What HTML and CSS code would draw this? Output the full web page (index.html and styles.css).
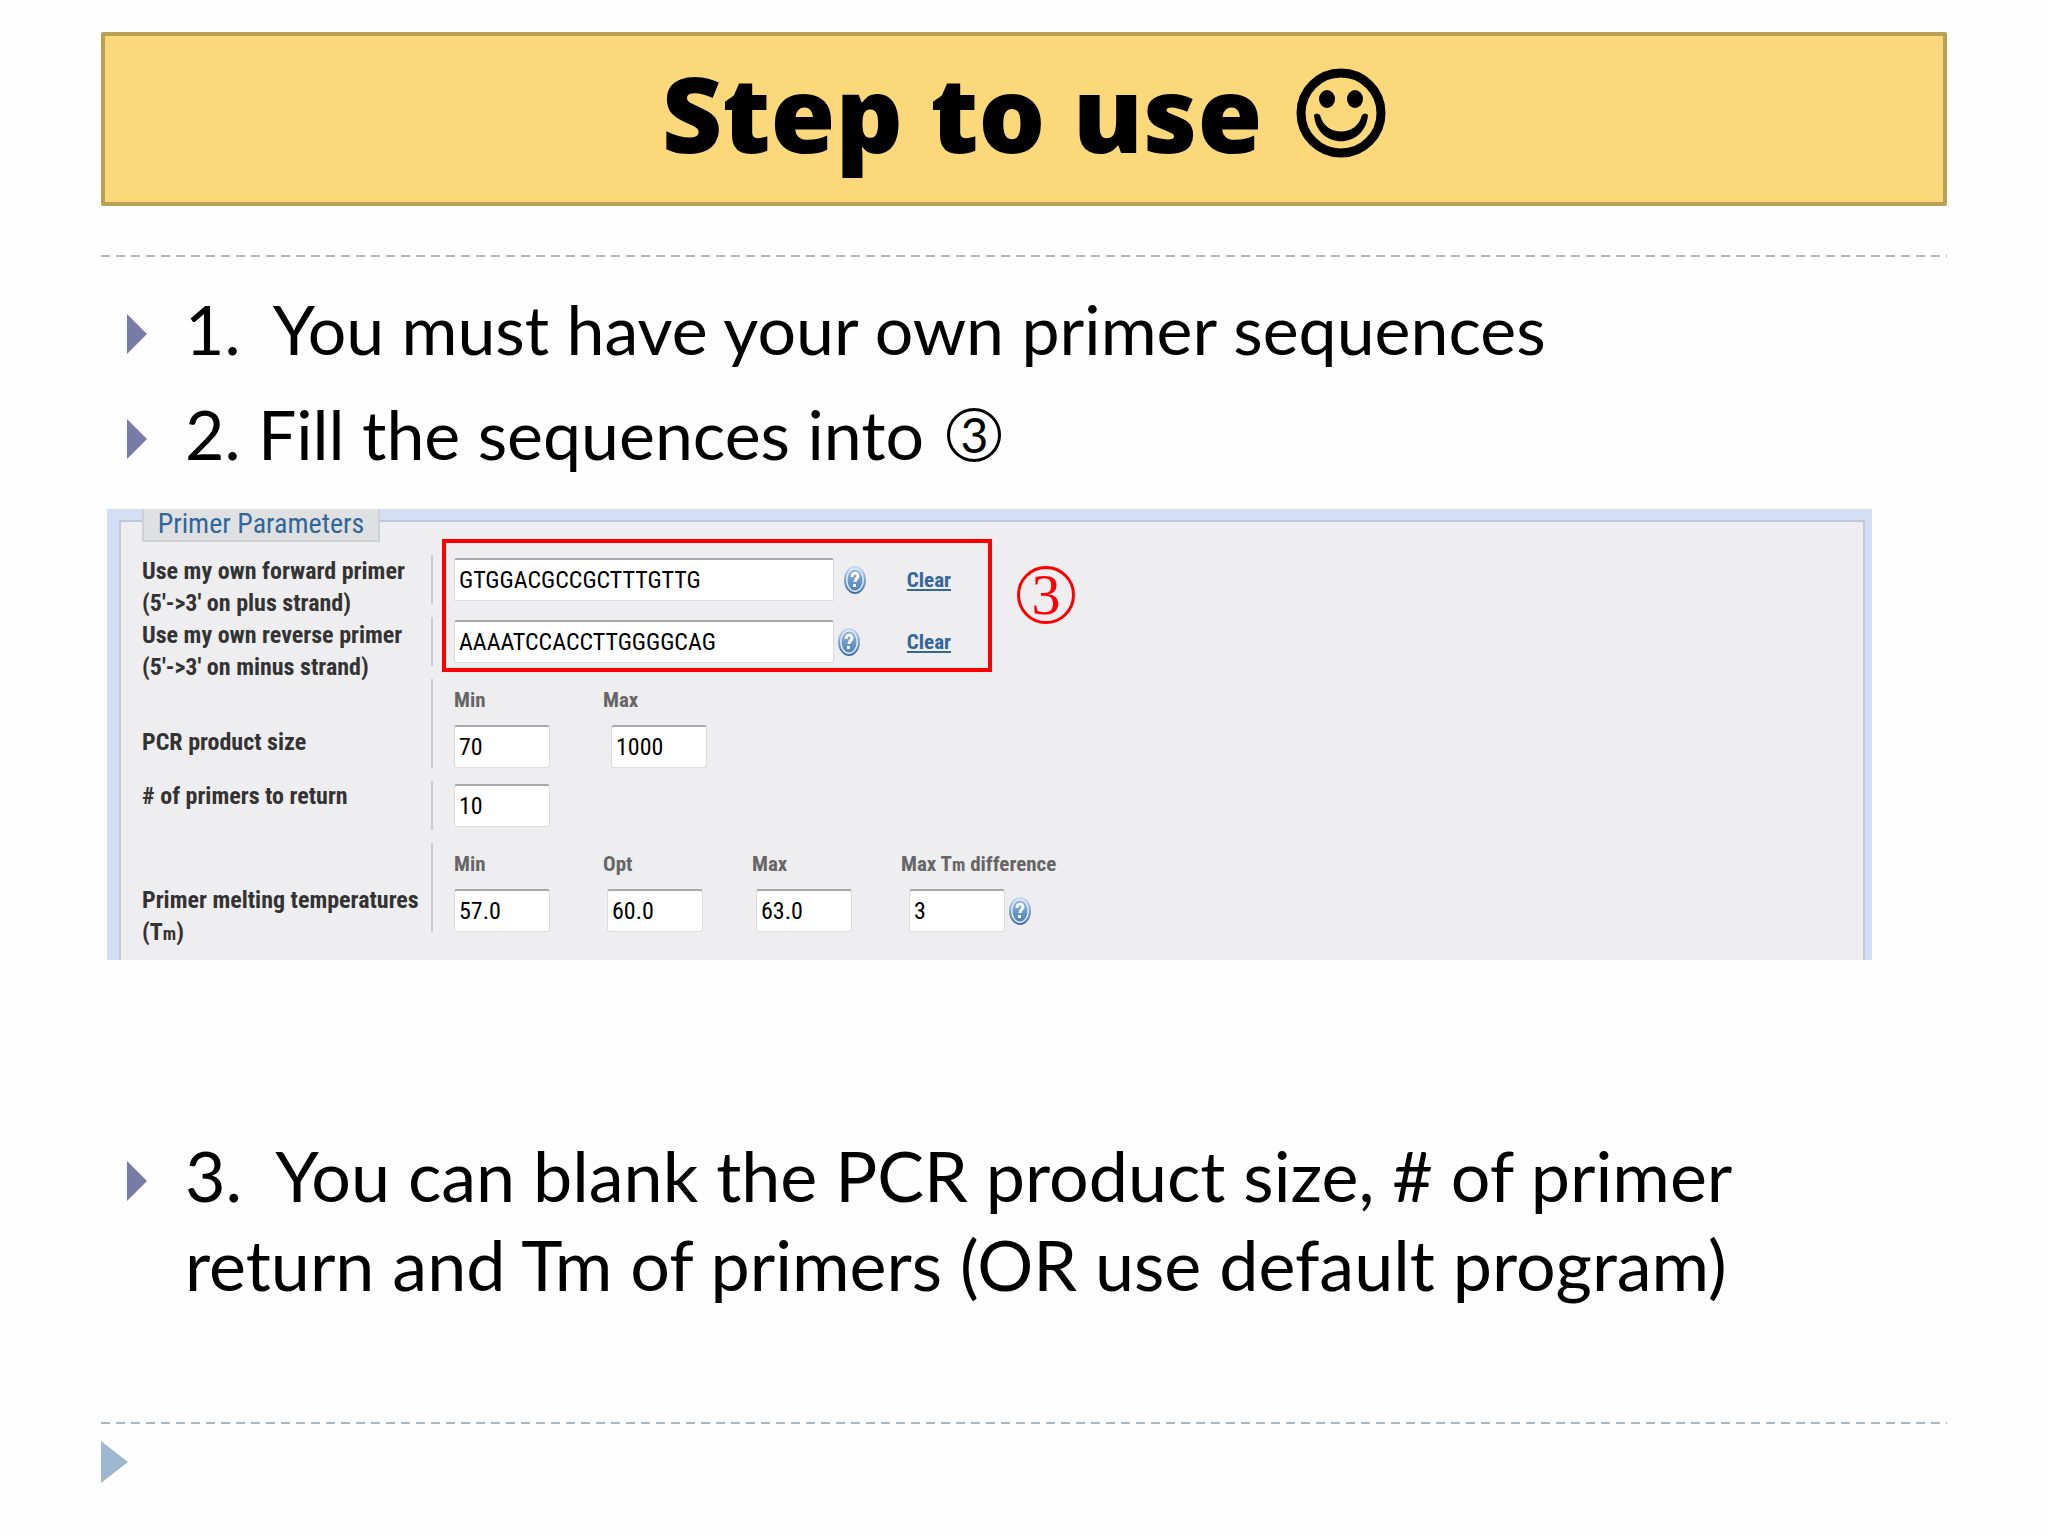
FILE: index.html
```html
<!DOCTYPE html>
<html lang="en">
<head>
<meta charset="utf-8">
<meta name="viewport" content="width=device-width, initial-scale=1">
<title>Step to use</title>
<link rel="stylesheet" href="styles.css">
</head>
<body>
<svg class="sprite" aria-hidden="true">
  <defs>
    <linearGradient id="ball" x1="0" y1="0" x2="0" y2="1">
      <stop offset="0" stop-color="#8fb2dc"/>
      <stop offset="1" stop-color="#4f82ba"/>
    </linearGradient>
    <linearGradient id="rim" x1="0" y1="0" x2="0" y2="1">
      <stop offset="0" stop-color="#c3d8f2"/>
      <stop offset="1" stop-color="#3f70a8"/>
    </linearGradient>
  </defs>
  <symbol id="help" viewBox="0 0 22 28" preserveAspectRatio="none">
    <ellipse cx="11" cy="14" rx="10" ry="13" fill="#e6eefa" stroke="url(#rim)" stroke-width="2"/>
    <ellipse cx="11" cy="14" rx="7.500" ry="10.500" fill="url(#ball)"/>
    <path d="M8 11c0-5 6-5 6-1 0 3-3 2-3 6" fill="none" stroke="#fff" stroke-width="3"/>
    <path d="M9 18h3v3h-3z" fill="#fff"/>
  </symbol>
</svg>
<main class="slide">
  <header class="banner">
    <h1 class="title">Step to use</h1>
    <svg class="smiley" viewBox="0 0 90 90" role="img" aria-label="smiling face">
      <circle cx="45" cy="45" r="40" fill="none" stroke="#000" stroke-width="9"/>
      <ellipse cx="31" cy="31" rx="8" ry="9"/>
      <ellipse cx="59" cy="31" rx="8" ry="9"/>
      <path d="M18 47q3-3 6 0c5 22 37 22 42 0q3-3 6 0c-3 35-51 35-54 0z"/>
    </svg>
  </header>
  <div class="rule"></div>
  <ul class="steps">
    <li class="step">1.&nbsp; You must have your own primer sequences</li>
    <li class="step">2. Fill the sequences into <span class="ring">3</span></li>
  </ul>
  <section class="shot">
    <form class="panel">
      <h2 class="legend">Primer Parameters</h2>
      <div class="form">
        <div class="labels">
          <label class="label" for="fwd">Use my own forward primer<br>(5'-&gt;3' on plus strand)</label>
          <label class="label" for="rev">Use my own reverse primer<br>(5'-&gt;3' on minus strand)</label>
          <label class="label label-size" for="size-min">PCR product size</label>
          <label class="label label-count" for="count"># of primers to return</label>
          <label class="label label-tm" for="tm-min">Primer melting temperatures<br>(T<small>m</small>)</label>
        </div>
        <div class="groups">
          <div class="group group-seq">
            <input class="box seq" id="fwd" value="GTGGACGCCGCTTTGTTG">
            <svg class="help help-wide"><use href="#help"/></svg>
            <a class="clear" href="#fwd">Clear</a>
          </div>
          <div class="group group-seq">
            <input class="box seq" id="rev" value="AAAATCCACCTTGGGGCAG">
            <svg class="help"><use href="#help"/></svg>
            <a class="clear" href="#rev">Clear</a>
          </div>
          <div class="group group-tall">
            <div class="field"><label class="hint" for="size-min">Min</label><input class="box num" id="size-min" value="70"></div>
            <div class="field"><label class="hint" for="size-max">Max</label><input class="box num shift" id="size-max" value="1000"></div>
          </div>
          <div class="group">
            <input class="box num" id="count" value="10">
          </div>
          <div class="group group-tall">
            <div class="field"><label class="hint" for="tm-min">Min</label><input class="box num" id="tm-min" value="57.0"></div>
            <div class="field"><label class="hint" for="tm-opt">Opt</label><input class="box num shift-half" id="tm-opt" value="60.0"></div>
            <div class="field"><label class="hint" for="tm-max">Max</label><input class="box num shift-half" id="tm-max" value="63.0"></div>
            <div class="field"><label class="hint" for="tm-diff">Max T<small>m</small> difference</label>
              <div class="pair"><input class="box num shift" id="tm-diff" value="3"><svg class="help"><use href="#help"/></svg></div></div>
          </div>
        </div>
      </div>
    </form>
    <div class="mark"></div>
    <span class="ring ring-red">3</span>
  </section>
  <ul class="steps steps-last">
    <li class="step">3.&nbsp; You can blank the PCR product size, # of primer<br>return and Tm of primers (OR use default program)</li>
  </ul>
  <footer class="foot">
    <div class="rule"></div>
    <div class="arrow"></div>
  </footer>
</main>
</body>
</html>
```
FILE: styles.css
```css
* { box-sizing: border-box; }

body {
  margin: 0;
  background: #fefefe;
  color: #000;
  font-family: Lato, "Open Sans", sans-serif;
}

.sprite { position: absolute; width: 0; height: 0; }

.slide { padding: 32px 101px 0; }

.banner {
  display: flex;
  justify-content: center;
  align-items: center;
  gap: 34px;
  height: 174px;
  padding-bottom: 12px;
  border: 4px solid #b8a055;
  border-radius: 2px;
  background: #fbd97b;
}

.title {
  margin: 0;
  font-family: "Open Sans", sans-serif;
  font-size: 105px;
  line-height: 128px;
  font-weight: 800;
}

.smiley { width: 90px; height: 90px; }

.rule {
  height: 2px;
  margin-top: 49px;
  background: repeating-linear-gradient(90deg, #a9bac6 0 9px, transparent 9px 15px);
}

.steps {
  margin: 27px 0 0;
  padding: 0 0 0 26px;
  list-style: none;
}

.step {
  position: relative;
  padding-left: 58px;
  margin-bottom: 16px;
  font-size: 68px;
  line-height: 89px;
}

.steps-last .step { font-size: 70px; }

.step::before {
  content: "";
  position: absolute;
  left: 0;
  top: 30px;
  width: 20px;
  height: 40px;
  background: #767ba8;
  clip-path: polygon(0 0, 100% 50%, 0 100%);
}

.ring {
  display: inline-flex;
  justify-content: center;
  align-items: center;
  width: 54px;
  height: 54px;
  margin-left: 6px;
  border: 3px solid #000;
  border-radius: 50%;
  font-size: 48px;
  line-height: 48px;
  vertical-align: 7px;
}

.shot {
  position: relative;
  margin: 31px 75px 0 6px;
  padding: 11px 7px 0 12px;
  background: #d3dff4;
  font-family: "Roboto Condensed", "Open Sans Condensed", "Noto Sans Condensed", "Liberation Sans", sans-serif;
}

.panel {
  height: 440px;
  border: 2px solid #c2c9d6;
  border-bottom: 0;
  background: #eeedef;
}

.legend {
  width: 238px;
  height: 33px;
  margin: -13px 0 0 21px;
  border: 2px solid #cfd0d3;
  border-top: 0;
  background: #dfe0e2;
  color: #336699;
  font-size: 28px;
  line-height: 30px;
  font-weight: 400;
  text-align: center;
}

.form {
  display: flex;
  margin: 13px 0 0 21px;
}

.labels { width: 289px; }

.label {
  display: block;
  color: #333;
  font-size: 24px;
  line-height: 32px;
  font-weight: 700;
  white-space: nowrap;
}

.label-size { margin-top: 43px; }
.label-count { margin-top: 22px; }
.label-tm { margin-top: 72px; }

small { font-size: 18px; }

.groups {
  display: flex;
  flex-direction: column;
  gap: 13px;
}

.group {
  display: flex;
  align-items: center;
  height: 49px;
  padding-left: 21px;
  border-left: 2px solid #cbcbcf;
}

.group-seq { width: 520px; }
.group-tall { height: 89px; align-items: flex-end; }

.box {
  height: 43px;
  margin: 0;
  padding: 0 4px;
  border: 1px solid #dcdcde;
  border-top: 2px solid #a9a9ab;
  border-radius: 3px;
  background: #fff;
  color: #000;
  font-family: inherit;
  font-size: 24px;
}

.seq { width: 380px; }
.num { width: 96px; }
.shift { margin-left: 8px; }
.shift-half { margin-left: 4px; }

.field {
  display: flex;
  flex-direction: column;
  gap: 9px;
  width: 149px;
}

.hint {
  height: 32px;
  color: #666;
  font-size: 21px;
  line-height: 32px;
  font-weight: 700;
  white-space: nowrap;
}

.pair { display: flex; align-items: center; }

.help { width: 22px; height: 28px; margin-left: 4px; flex: none; }
.help-wide { margin-left: 10px; }

.clear {
  margin-left: auto;
  color: #336699;
  font-size: 21px;
  font-weight: 700;
}

.mark {
  position: absolute;
  left: 335px;
  top: 30px;
  width: 550px;
  height: 133px;
  border: 4px solid #f00;
}

.ring-red {
  position: absolute;
  left: 910px;
  top: 57px;
  width: 58px;
  height: 58px;
  margin: 0;
  border-color: #f00;
  color: #f00;
  font-family: "Liberation Serif", serif;
  font-size: 58px;
}

.shot + .steps { margin-top: 171px; }

.foot .rule { margin-top: 113px; }

.arrow {
  width: 27px;
  height: 42px;
  margin-top: 17px;
  background: #9fb7cf;
  clip-path: polygon(0 0, 100% 50%, 0 100%);
}
```
